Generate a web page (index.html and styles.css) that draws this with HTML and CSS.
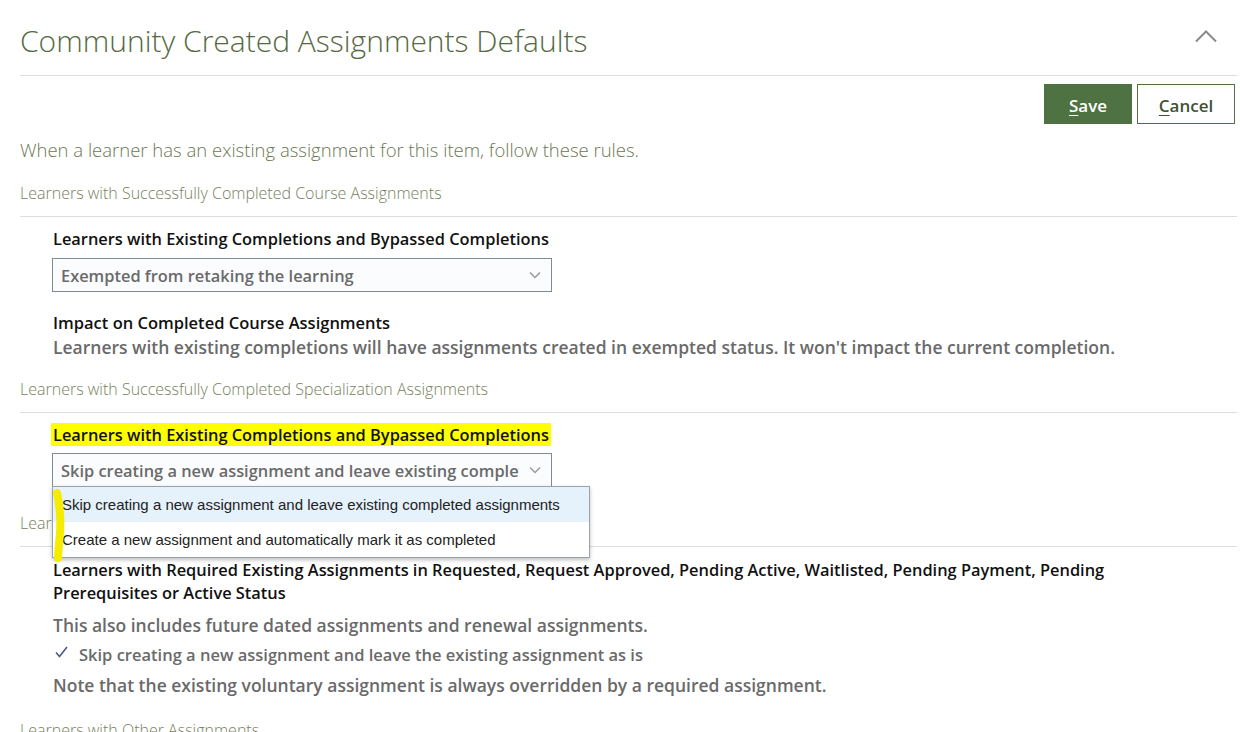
FILE: index.html
```html
<!DOCTYPE html>
<html lang="en">
<head>
  <meta charset="UTF-8" />
  <title>Community Created Assignments Defaults</title>
  <link rel="stylesheet" href="styles.css">
</head>
<body>
  <div class="panel">
    <header class="panel-head">
      <h1>Community Created Assignments Defaults</h1>
      <button class="collapse" aria-label="Collapse">
        <svg width="22" height="14" viewBox="0 0 22 14"><polyline points="1,12.5 11,2.5 21,12.5" fill="none" stroke="#8a8a8a" stroke-width="2"/></svg>
      </button>
    </header>

    <div class="actions">
      <button class="btn btn-primary"><u>S</u>ave</button>
      <button class="btn btn-secondary"><u>C</u>ancel</button>
    </div>

    <p class="intro">When a learner has an existing assignment for this item, follow these rules.</p>

    <!-- Course assignments -->
    <section class="group">
      <h2 class="group-title">Learners with Successfully Completed Course Assignments</h2>
      <div class="group-body">
        <div class="field">
          <label class="field-label">Learners with Existing Completions and Bypassed Completions</label>
          <div class="select">
            <span class="select-value">Exempted from retaking the learning</span>
            <svg class="select-arrow" width="12" height="8" viewBox="0 0 12 8"><polyline points="1,1.5 6,6.5 11,1.5" fill="none" stroke="#9a9a9a" stroke-width="1.5"/></svg>
          </div>
        </div>
        <div class="info">
          <h3>Impact on Completed Course Assignments</h3>
          <p>Learners with existing completions will have assignments created in exempted status. It won't impact the current completion.</p>
        </div>
      </div>
    </section>

    <!-- Specialization assignments -->
    <section class="group">
      <h2 class="group-title">Learners with Successfully Completed Specialization Assignments</h2>
      <div class="group-body">
        <div class="field">
          <label class="field-label"><span class="highlight">Learners with Existing Completions and Bypassed Completions</span></label>
          <div class="select-wrap">
            <div class="select open">
              <span class="select-value">Skip creating a new assignment and leave existing completed assignments</span>
              <svg class="select-arrow" width="12" height="8" viewBox="0 0 12 8"><polyline points="1,1.5 6,6.5 11,1.5" fill="none" stroke="#9a9a9a" stroke-width="1.5"/></svg>
            </div>
            <ul class="options">
              <li class="option selected">Skip creating a new assignment and leave existing completed assignments</li>
              <li class="option">Create a new assignment and automatically mark it as completed</li>
            </ul>
            <svg class="marker" width="14" height="74" viewBox="0 0 14 74"><path d="M5 4 C 8 18, 9 30, 8 44 C 7 56, 6 64, 6 69" fill="none" stroke="#f5ec00" stroke-width="8" stroke-linecap="round"/></svg>
          </div>
        </div>
      </div>
    </section>

    <!-- Required assignments -->
    <section class="group">
      <h2 class="group-title">Learners with Required Assignments</h2>
      <div class="group-body">
        <h3 class="field-label wide">Learners with Required Existing Assignments in Requested, Request Approved, Pending Active, Waitlisted, Pending Payment, Pending Prerequisites or Active Status</h3>
        <p class="note first">This also includes future dated assignments and renewal assignments.</p>
        <p class="note check">
          <svg width="13" height="12" viewBox="0 0 13 12"><polyline points="1,6.5 4.5,10.5 12,1" fill="none" stroke="#4b5a86" stroke-width="1.6"/></svg>
          Skip creating a new assignment and leave the existing assignment as is
        </p>
        <p class="note">Note that the existing voluntary assignment is always overridden by a required assignment.</p>
      </div>
    </section>

    <section class="group">
      <h2 class="group-title">Learners with Other Assignments</h2>
    </section>
  </div>
</body>
</html>
```

FILE: styles.css
```css
body {
  margin: 0;
  background: #fff;
  font-family: 'Open Sans', 'Noto Sans', sans-serif;
  overflow: hidden;
}
.panel {
  padding: 0 3px 0 20px;
}
.panel-head {
  display: flex;
  justify-content: space-between;
  align-items: center;
  height: 75px;
  border-bottom: 1px solid #d9dee3;
}
h1 {
  margin: 0;
  padding-top: 6px;
  font-size: 30px;
  font-weight: 300;
  color: #56693f;
}
.collapse {
  background: none;
  border: none;
  padding: 0;
  margin: 0 20px 4px 0;
  display: flex;
}
.actions {
  display: flex;
  justify-content: flex-end;
  gap: 5px;
  padding: 8px 2px 0 0;
}
.btn {
  height: 40px;
  padding-top: 3px;
  font-family: inherit;
  font-size: 17px;
  font-weight: 600;
  cursor: pointer;
}
.btn u {
  text-underline-offset: 3px;
}
.btn-primary {
  width: 88px;
  background: #4f7242;
  border: none;
  color: #fff;
}
.btn-secondary {
  width: 98px;
  background: #fff;
  border: 1px solid #4f7242;
  color: #3f5236;
}
.intro {
  margin: 14px 0 0;
  font-size: 18.5px;
  line-height: 24px;
  font-weight: 300;
  color: #6c7852;
}
.group {
  margin-top: 19px;
}
.intro + .group {
  margin-top: 20px;
}
.group-title {
  margin: 0;
  padding-bottom: 12px;
  border-bottom: 1px solid #d9dee3;
  font-size: 16px;
  line-height: 22px;
  font-weight: 300;
  color: #76825c;
}
.group-body {
  padding: 11px 0 0 33px;
}
.field {
  padding-bottom: 6px;
}
.field-label {
  display: block;
  margin: 0;
  font-size: 16.4px;
  line-height: 22px;
  font-weight: 600;
  color: #111;
}
.field-label.wide {
  max-width: 1070px;
  line-height: 23px;
}
.highlight {
  background: #ffff00;
  padding: 0 2px;
  margin-left: -2px;
}
.select-wrap {
  position: relative;
}
.select {
  box-sizing: border-box;
  width: 500px;
  height: 34px;
  margin: 8px 0 0 -1px;
  padding: 0 10px 0 8px;
  display: flex;
  align-items: center;
  gap: 10px;
  border: 1px solid #7d8b92;
  background: #fbfcfe;
}
.select-wrap .select {
  margin-top: 7px;
}
.select-value {
  flex: 1;
  overflow: hidden;
  white-space: nowrap;
  font-size: 16.4px;
  font-weight: 600;
  color: #6a6a6a;
}
.options {
  position: absolute;
  top: 33px;
  left: -1px;
  width: 536px;
  margin: 0;
  padding: 0;
  list-style: none;
  background: #fff;
  border: 1px solid #9aa3ab;
  box-shadow: 0 2px 4px rgba(0,0,0,0.25);
  z-index: 2;
}
.option {
  height: 35px;
  padding-left: 9px;
  display: flex;
  align-items: center;
  font-family: 'Liberation Sans', Arial, sans-serif;
  font-size: 15px;
  color: #222;
}
.option.selected {
  background: #e5f1fb;
}
.marker {
  position: absolute;
  top: 36px;
  left: -1px;
  z-index: 3;
}
.info {
  margin-top: 13px;
}
.info h3,
.info p {
  margin: 0;
  line-height: 24px;
  font-weight: 600;
}
.info h3 {
  font-size: 16.5px;
  color: #111;
}
.info p {
  font-size: 17.5px;
  color: #6a6a6a;
}
.note {
  margin: 0;
  font-size: 17.5px;
  line-height: 30px;
  font-weight: 600;
  color: #6a6a6a;
}
.note.first {
  margin-top: 6px;
}
.check {
  display: flex;
  align-items: center;
  gap: 11px;
  padding-left: 2px;
  font-size: 16.5px;
}
.check svg {
  margin-bottom: 6px;
}
```
